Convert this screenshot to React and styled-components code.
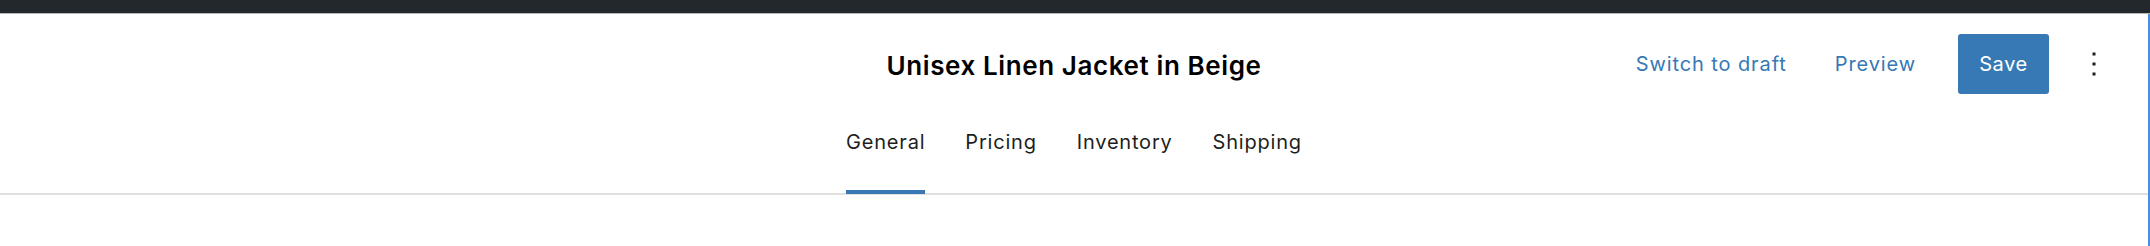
import React from 'react'
import styled, { createGlobalStyle } from 'styled-components'

const GlobalStyle = createGlobalStyle`
	html, body {
		margin: 0;
		padding: 0;
		background: #ffffff;
	}
	body {
		font-family: Inter, "Noto Sans", "Liberation Sans", sans-serif;
		color: #1e1e1e;
	}
`

const tabs = ['General', 'Pricing', 'Inventory', 'Shipping']

function KebabIcon() {
	return (
		<svg width='4' height='24' viewBox='0 0 4 24'>
			<rect x='0.5' y='0.5' width='3' height='3' fill='#1e1e1e' />
			<rect x='0.5' y='10.5' width='3' height='3' fill='#1e1e1e' />
			<rect x='0.5' y='20.5' width='3' height='3' fill='#1e1e1e' />
		</svg>
	)
}

function App() {
	const [active, setActive] = React.useState('General')

	return (
		<Page>
			<GlobalStyle />
			<AdminBar />
			<Main>
				<Header>
					<TopRow>
						<span />
						<Title>Unisex Linen Jacket in Beige</Title>
						<Actions>
							<LinkButton>Switch to draft</LinkButton>
							<LinkButton>Preview</LinkButton>
							<PrimaryButton>Save</PrimaryButton>
							<MenuButton aria-label='More'>
								<KebabIcon />
							</MenuButton>
						</Actions>
					</TopRow>
					<TabList>
						{tabs.map((tab) => (
							<Tab key={tab} $active={tab === active} onClick={() => setActive(tab)}>
								{tab}
							</Tab>
						))}
					</TabList>
				</Header>
				<Body />
			</Main>
		</Page>
	)
}

export default App

const Page = styled.div`
	display: flex;
	flex-direction: column;
	height: 246px;
	overflow: hidden;
`
const AdminBar = styled.div`
	height: 13px;
	background-color: #23282d;
	border-bottom: 1px solid #b4b7ba;
	flex-shrink: 0;
`
const Main = styled.div`
	flex: 1;
	display: flex;
	flex-direction: column;
	border-right: 2px solid #4a8fdf;
	background: #ffffff;
`
const Header = styled.div`
	display: flex;
	flex-direction: column;
	border-bottom: 2px solid #e0e0e0;
`
const TopRow = styled.div`
	display: grid;
	grid-template-columns: 1fr auto 1fr;
	align-items: center;
	height: 100px;
`
const Title = styled.h1`
	margin: 0;
	font-size: 26px;
	font-weight: 600;
	color: #000000;
	letter-spacing: 0.6px;
	transform: translateY(1px);
`
const Actions = styled.div`
	display: flex;
	align-items: center;
	justify-content: flex-end;
	padding-right: 52px;
	gap: 43px;
`
const LinkButton = styled.button`
	background: none;
	border: none;
	padding: 0;
	margin-right: 5px;
	font-family: inherit;
	font-size: 20px;
	letter-spacing: 0.9px;
	color: #3678b6;
	cursor: pointer;
`
const PrimaryButton = styled.button`
	width: 91px;
	height: 60px;
	margin-left: -6px;
	border: none;
	border-radius: 3px;
	background-color: #3679b5;
	color: #ffffff;
	font-family: inherit;
	font-size: 20px;
	letter-spacing: 0.6px;
	cursor: pointer;
`
const MenuButton = styled.button`
	display: flex;
	align-items: center;
	justify-content: center;
	background: none;
	border: none;
	padding: 0;
	width: 4px;
	height: 24px;
	cursor: pointer;
`
const TabList = styled.div`
	display: flex;
	justify-content: center;
	gap: 40px;
	height: 79px;
`
const Tab = styled.button`
	display: flex;
	align-items: flex-start;
	background: none;
	border: none;
	padding: 14px 0 0;
	margin-bottom: -1px;
	font-family: inherit;
	font-size: 20px;
	line-height: 28px;
	letter-spacing: 0.8px;
	color: #1e1e1e;
	border-bottom: 4px solid ${(p) => (p.$active ? '#3679b5' : 'transparent')};
	cursor: pointer;
`
const Body = styled.div`
	flex: 1;
`
